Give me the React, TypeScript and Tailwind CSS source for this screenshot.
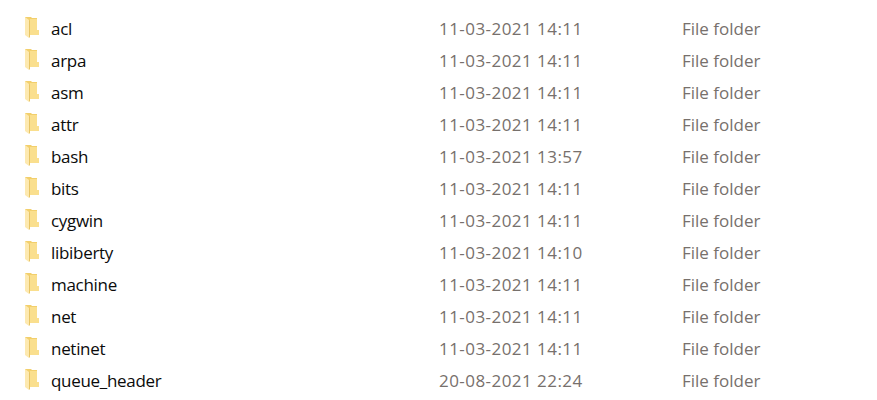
const rows = [
  { name: 'acl', date: '11-03-2021 14:11' },
  { name: 'arpa', date: '11-03-2021 14:11' },
  { name: 'asm', date: '11-03-2021 14:11' },
  { name: 'attr', date: '11-03-2021 14:11' },
  { name: 'bash', date: '11-03-2021 13:57' },
  { name: 'bits', date: '11-03-2021 14:11' },
  { name: 'cygwin', date: '11-03-2021 14:11' },
  { name: 'libiberty', date: '11-03-2021 14:10' },
  { name: 'machine', date: '11-03-2021 14:11' },
  { name: 'net', date: '11-03-2021 14:11' },
  { name: 'netinet', date: '11-03-2021 14:11' },
  { name: 'queue_header', date: '20-08-2021 22:24' },
];

function FolderIcon() {
  return (
    <svg width="14" height="21" viewBox="0 0 14 21" className="mb-[3px] shrink-0">
      <path d="M0 0h6l1 1h5v14H0z" fill="#f2cf6c" />
      <path d="M5 2h7v11h2v5H5z" fill="#fadf8e" />
      <path d="M0 0l4 3v18l-4-3z" fill="#fde9b0" />
      <path d="M4 3v18l1-1V4z" fill="#e8c565" />
    </svg>
  );
}

export default function App() {
  return (
    <div className="h-[400px] w-[877px] overflow-hidden bg-white pt-[13px] font-['Open_Sans','Noto_Sans',sans-serif] text-[17px]">
      {rows.map((row) => (
        <div key={row.name} className="flex h-8 items-center">
          <div className="flex w-[439px] items-center gap-3 pl-[25px] text-[#0b0b0b]">
            <FolderIcon />
            <span className="tracking-[-0.3px]">{row.name}</span>
          </div>
          <div className="w-[243px] tracking-[0.45px] text-[#77706c]">{row.date}</div>
          <div className="text-[#77706c]">File folder</div>
        </div>
      ))}
    </div>
  );
}
